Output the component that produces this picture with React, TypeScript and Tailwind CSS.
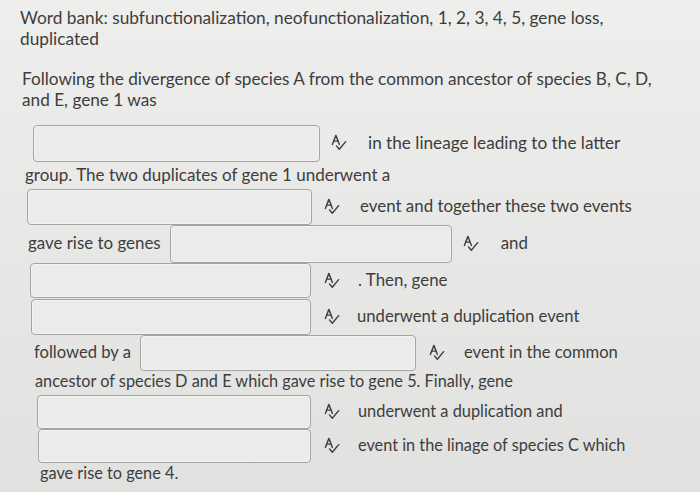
import React from "react";

const Check = () => (
  <svg width="17" height="17" viewBox="0 0 16 16" className="shrink-0" fill="none" stroke="#3f3f3f" strokeWidth="1.35" strokeLinecap="round" strokeLinejoin="round">
    <path d="M1.3 9.8 L4.6 1.3 L7.9 9.8" />
    <path d="M2.6 6.7 H6.6" />
    <path d="M5.2 11.2 L7.8 14.4 L13.8 7.2" />
  </svg>
);

const Box = ({ w, h }: { w: string; h: string }) => (
  <div className={`${w} ${h} shrink-0 rounded-[4px] border border-[#a4a4a2] bg-[#ebebea] shadow-[inset_0_0_0_1px_rgba(255,255,255,0.4)]`} />
);

export default function App() {
  return (
    <div
      className="w-[700px] h-[492px] overflow-hidden bg-gradient-to-b from-[#eeeeed] to-[#e1e1df] text-[#3d3d3d]"
      style={{ fontFamily: "Lato, 'Open Sans', sans-serif" }}
    >
      <div className="pl-[20px] pt-[7px] text-[17.3px] leading-[21px] w-[660px]">
        Word bank: subfunctionalization, neofunctionalization, 1, 2, 3, 4, 5, gene loss,
        <br />
        duplicated
      </div>
      <div className="pl-[22px] mt-[19px] text-[17.2px] leading-[21px]">
        Following the divergence of species A from the common ancestor of species B, C, D,
        <br />
        and E, gene 1 was
      </div>

      <div className="leading-[20px]">
        <div className="flex items-center pl-[33px] mt-[15px] text-[17.2px]">
          <Box w="w-[287px]" h="h-[37px]" />
          <div className="ml-[11px] -mt-[2px]"><Check /></div>
          <span className="ml-[20px] -mt-[2px]">in the lineage leading to the latter</span>
        </div>
        <div className="pl-[25px] mt-[3px] h-[20px] text-[17px]">group. The two duplicates of gene 1 underwent a</div>
        <div className="flex items-center pl-[27px] mt-[4px] text-[16.9px]">
          <Box w="w-[285px]" h="h-[36px]" />
          <div className="ml-[12px] -mt-[2px]"><Check /></div>
          <span className="ml-[19px] -mt-[3px]">event and together these two events</span>
        </div>
        <div className="flex items-center pl-[28px] text-[16.9px]">
          <span className="-mt-[3px]">gave rise to genes</span>
          <div className="ml-[9px]"><Box w="w-[282px]" h="h-[38px]" /></div>
          <div className="ml-[11px] -mt-[2px]"><Check /></div>
          <span className="ml-[21px] -mt-[3px]">and</span>
        </div>
        <div className="flex items-center pl-[30px] text-[16.9px]">
          <Box w="w-[281px]" h="h-[35px]" />
          <div className="ml-[13px] -mt-[1px]"><Check /></div>
          <span className="ml-[17px] -mt-[2px]">. Then, gene</span>
        </div>
        <div className="flex items-center pl-[31px] mt-[1px] text-[16.65px]">
          <Box w="w-[280px]" h="h-[36px]" />
          <div className="ml-[13px] -mt-[1px]"><Check /></div>
          <span className="ml-[16px] -mt-[2px]">underwent a duplication event</span>
        </div>
        <div className="flex items-center pl-[34px] text-[16.6px]">
          <span className="-mt-[3px]">followed by a</span>
          <div className="ml-[9px]"><Box w="w-[276px]" h="h-[36px]" /></div>
          <div className="ml-[13px] -mt-[2px]"><Check /></div>
          <span className="ml-[18px] -mt-[3px]">event in the common</span>
        </div>
        <div className="pl-[35px] mt-[0px] h-[20px] text-[16.3px]">ancestor of species D and E which gave rise to gene 5. Finally, gene</div>
        <div className="flex items-center pl-[37px] mt-[4px] text-[16.35px]">
          <Box w="w-[274px]" h="h-[34px]" />
          <div className="ml-[13px] -mt-[2px]"><Check /></div>
          <span className="ml-[17px] -mt-[3px]">underwent a duplication and</span>
        </div>
        <div className="flex items-center pl-[38px] text-[16.3px]">
          <Box w="w-[273px]" h="h-[34px]" />
          <div className="ml-[13px] -mt-[2px]"><Check /></div>
          <span className="ml-[17px] -mt-[3px]">event in the linage of species C which</span>
        </div>
        <div className="pl-[40px] h-[20px] text-[16.3px]">gave rise to gene 4.</div>
      </div>
    </div>
  );
}
